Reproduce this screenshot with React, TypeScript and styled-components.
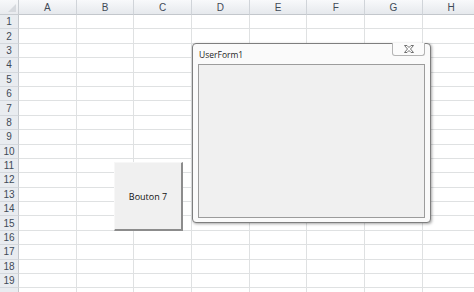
import React from "react";
import styled, { createGlobalStyle } from "styled-components";

const GlobalStyle = createGlobalStyle`
  html, body {
    margin: 0;
    padding: 0;
    background: #ffffff;
    overflow: hidden;
  }
`;

const COLS = ["A", "B", "C", "D", "E", "F", "G", "H"];
const ROWS = Array.from({ length: 19 }, (_, i) => i + 1);

const Page = styled.div`
  position: relative;
  width: 474px;
  height: 292px;
  overflow: hidden;
  background: #ffffff;
`;

const Sheet = styled.div`
  display: grid;
  grid-template-columns: 19px repeat(8, 57.7px);
  grid-template-rows: 15px repeat(19, 14.4px) 20px;
  font-family: "Liberation Sans", Arial, sans-serif;
`;

const Corner = styled.div`
  position: relative;
  background: linear-gradient(#f7f8fa, #e8eaee);
  border-right: 1px solid #c8ccd1;
  border-bottom: 1px solid #c8ccd1;
  box-sizing: border-box;

  &::after {
    content: "";
    position: absolute;
    right: 2px;
    bottom: 2px;
    border-left: 8px solid transparent;
    border-bottom: 8px solid #d6d9de;
  }
`;

const ColHead = styled.div`
  display: flex;
  align-items: center;
  justify-content: center;
  background: linear-gradient(#f8f9fb, #e6e9ed);
  border-right: 1px solid #d0d4d9;
  border-bottom: 1px solid #c3c7cc;
  box-sizing: border-box;
  font-size: 10px;
  color: #3f4a57;
`;

const RowHead = styled.div`
  display: flex;
  align-items: center;
  justify-content: center;
  background: #e9ecf0;
  border-right: 1px solid #c3c7cc;
  border-bottom: 1px solid #d4d8dd;
  box-sizing: border-box;
  font-size: 10px;
  color: #3f4a57;
`;

const Cell = styled.div`
  border-right: 1px solid #dfe1e2;
  border-bottom: 1px solid #dfe1e2;
  box-sizing: border-box;
`;

const SheetButton = styled.div`
  position: absolute;
  left: 114px;
  top: 162px;
  width: 69px;
  height: 69px;
  box-sizing: border-box;
  display: flex;
  align-items: center;
  justify-content: center;
  background: #f0f0f0;
  border-top: 1px solid #f7f7f7;
  border-left: 1px solid #f7f7f7;
  border-right: 2px solid #8c8c8c;
  border-bottom: 2px solid #8c8c8c;
  font-family: "Open Sans", "Noto Sans", sans-serif;
  font-size: 9px;
  color: #111111;
`;

const FormWindow = styled.div`
  position: absolute;
  left: 192px;
  top: 43px;
  width: 239px;
  height: 180px;
  box-sizing: border-box;
  display: flex;
  flex-direction: column;
  padding: 0 5px 4px 5px;
  background: #fafafa;
  border: 1px solid #7e7e7e;
  border-radius: 4px;
  box-shadow: 1px 1px 3px rgba(0, 0, 0, 0.35);
`;

const TitleBar = styled.div`
  height: 20px;
  display: flex;
  align-items: center;
  padding-left: 1px;
  font-family: "Open Sans", "Noto Sans", sans-serif;
  font-size: 8.5px;
  color: #1e1e1e;
`;

const CloseTab = styled.div`
  position: absolute;
  right: 5px;
  top: -1px;
  width: 33px;
  height: 13px;
  box-sizing: border-box;
  display: flex;
  align-items: center;
  justify-content: center;
  background: #fbfbfb;
  border: 1px solid #b4b4b4;
  border-top: none;
  border-radius: 0 0 3px 3px;
`;

const ClientArea = styled.div`
  flex: 1;
  background: #f0f0f0;
  border: 1px solid #9c9c9c;
`;

const CloseGlyph = () => (
  <svg width="10" height="8" viewBox="0 0 10 8">
    <path
      d="M0.5 0.5 H3 L5 2.5 L7 0.5 H9.5 L6.5 4 L9.5 7.5 H7 L5 5.5 L3 7.5 H0.5 L3.5 4 Z"
      fill="#ffffff"
      stroke="#707070"
      strokeWidth="1"
      strokeLinejoin="round"
    />
  </svg>
);

export default function App() {
  return (
    <Page>
      <GlobalStyle />
      <Sheet>
        <Corner />
        {COLS.map((c) => (
          <ColHead key={c}>{c}</ColHead>
        ))}
        {ROWS.map((r) => (
          <React.Fragment key={r}>
            <RowHead>{r}</RowHead>
            {COLS.map((c) => (
              <Cell key={c + r} />
            ))}
          </React.Fragment>
        ))}
        <RowHead />
        {COLS.map((c) => (
          <Cell key={c + "x"} />
        ))}
      </Sheet>
      <SheetButton>Bouton 7</SheetButton>
      <FormWindow>
        <TitleBar>UserForm1</TitleBar>
        <CloseTab>
          <CloseGlyph />
        </CloseTab>
        <ClientArea />
      </FormWindow>
    </Page>
  );
}
